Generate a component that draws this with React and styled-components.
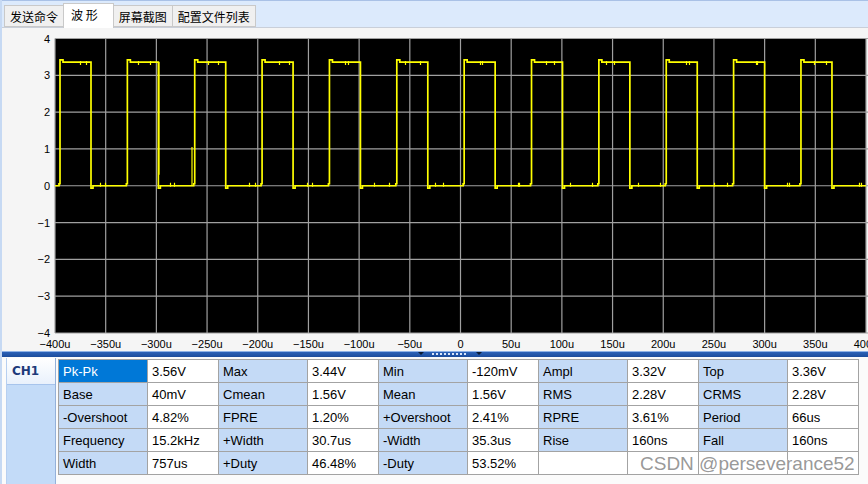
import React from 'react'
import styled, { createGlobalStyle } from 'styled-components'

const GlobalStyle = createGlobalStyle`
  html, body { margin: 0; padding: 0; background: #f5f5f5; }
  body { font-family: "Liberation Sans", Arial, sans-serif; }
`

const tabs = ['发送命令', '波 形', '屏幕截图', '配置文件列表']

const rows = [
  [['Pk-Pk', '3.56V'], ['Max', '3.44V'], ['Min', '-120mV'], ['Ampl', '3.32V'], ['Top', '3.36V']],
  [['Base', '40mV'], ['Cmean', '1.56V'], ['Mean', '1.56V'], ['RMS', '2.28V'], ['CRMS', '2.28V']],
  [['-Overshoot', '4.82%'], ['FPRE', '1.20%'], ['+Overshoot', '2.41%'], ['RPRE', '3.61%'], ['Period', '66us']],
  [['Frequency', '15.2kHz'], ['+Width', '30.7us'], ['-Width', '35.3us'], ['Rise', '160ns'], ['Fall', '160ns']],
  [['Width', '757us'], ['+Duty', '46.48%'], ['-Duty', '53.52%'], [null, null], [null, null]],
]

// plot geometry (svg coords, svg starts at page x=2, y=28)
const PX0 = 53
const PX1 = 864
const PY0 = 10.5
const PY1 = 305
const XSTEP = (PX1 - PX0) / 16
const YSTEP = (PY1 - PY0) / 8
const vy = v => PY0 + (4 - v) * YSTEP

const xLabels = Array.from({ length: 17 }, (_, i) => {
  const t = -400 + i * 50
  return t === 0 ? '0' : `${t < 0 ? '\u2212' : ''}${Math.abs(t)}u`
})
const yLabels = [4, 3, 2, 1, 0, -1, -2, -3, -4]

function buildWave() {
  const low = vy(0)
  const high = vy(3.36)
  const spike = vy(3.42)
  let d = `M ${PX0} ${low}`
  for (let i = 0; i < 13; i++) {
    const r = 58 + i * 67.36
    const f = r + 31
    d += ` L ${r - 1} ${low} L ${r - 1} ${low - 2} L ${r} ${low - 2} L ${r} ${spike} L ${r + 3} ${spike} L ${r + 3} ${high}`
    d += ` L ${f} ${high} L ${f} ${low + 2.5} L ${f + 2} ${low + 2.5} L ${f + 2} ${low}`
  }
  d += ` L ${PX1} ${low}`
  return d
}

function buildNoise() {
  let s = 11
  const rnd = () => {
    s = (s * 9301 + 49297) % 233280
    return s / 233280
  }
  const low = vy(0)
  const high = vy(3.36)
  let d = ''
  for (let i = 0; i < 13; i++) {
    const r = 58 + i * 67.36
    const f = r + 31
    for (let k = 0; k < 2; k++) {
      const x = Math.round(r + 6 + rnd() * 22) + 0.5
      d += ` M ${x} ${high - 1} L ${x} ${high + 3}`
    }
    for (let k = 0; k < 2; k++) {
      const x = Math.round(f + 6 + rnd() * 28) + 0.5
      d += ` M ${x} ${low + 1} L ${x} ${low - 3}`
    }
  }
  d += ` M 190 ${vy(1.05)} L 190 ${low}`
  d += ` M 157 ${vy(3.36)} L 157 ${vy(0.3)}`
  return d
}

const Window = styled.div`
  position: relative;
  width: 866px;
  height: 484px;
  overflow: hidden;
  border-left: 2px solid #c6d9f3;
  background: #f5f5f5;
  display: flex;
  flex-direction: column;
`

const TabBar = styled.div`
  height: 27px;
  flex: none;
  display: flex;
  align-items: flex-end;
  padding-left: 2px;
  background: #dceafc;
  border-top: 1px solid #a9c1e6;
  border-bottom: 1px solid #c9cfd9;
  box-sizing: border-box;
  height: 28px;
`

const Tab = styled.div`
  box-sizing: border-box;
  height: ${p => (p.$active ? '25px' : '22px')};
  margin-bottom: ${p => (p.$active ? '-1px' : '0')};
  padding: ${p => (p.$active ? '0 15px 3px 7px' : '0 5px')};
  display: flex;
  align-items: center;
  background: ${p => (p.$active ? '#ffffff' : '#f0f0f0')};
  border: 1px solid #c9c9c9;
  border-bottom: ${p => (p.$active ? 'none' : '1px solid #c9c9c9')};
  margin-right: -1px;
  font-family: "Noto Sans CJK SC", "Liberation Sans", sans-serif;
  font-size: 12px;
  color: #000;
  white-space: pre;
  position: relative;
  z-index: ${p => (p.$active ? 1 : 0)};
`

const ScopePanel = styled.div`
  height: 323px;
  flex: none;
  background: #f5f5f5;
`

const Splitter = styled.div`
  flex: none;
  height: 5px;
  border-top: 1px solid #8fb2e6;
  background: linear-gradient(#2b62b8, #1c4c9c);
  display: flex;
  align-items: flex-start;
  padding-left: 413px;
`

const BottomPanel = styled.div`
  flex: 1;
  display: flex;
  gap: 2px;
  padding: 1px 0 0 4px;
  background: #fbfbfb;
`

const ChannelColumn = styled.div`
  width: 48px;
  height: 100%;
  background: #c3dbf8;
  border-left: 1px solid #b7cff0;
  border-right: 1px solid #94b1da;
`

const ChannelTab = styled.div`
  height: 26px;
  display: flex;
  align-items: center;
  padding-left: 5px;
  background: linear-gradient(#ffffff, #e9f1fc);
  border-bottom: 1px solid #a7c4ec;
  font-family: Tahoma, "DejaVu Sans", "Liberation Sans", sans-serif;
  font-weight: bold;
  font-size: 12px;
  color: #1d3a7a;
`

const MeasureGrid = styled.div`
  margin-top: 1px;
  align-self: flex-start;
  display: grid;
  grid-template-columns: repeat(5, 88px 70px);
  grid-auto-rows: 22px;
  gap: 1px;
  padding: 1px;
  background: #a3a3a3;
`

const Cell = styled.div`
  display: flex;
  align-items: center;
  padding-left: 4px;
  font-size: 13px;
  white-space: nowrap;
  background: ${p => (p.$kind === 'selected' ? '#0078d7' : p.$kind === 'label' ? '#c4daf6' : '#ffffff')};
  color: ${p => (p.$kind === 'selected' ? '#ffffff' : '#000000')};
`

const Watermark = styled.div`
  position: absolute;
  left: 638px;
  top: 454px;
  font-family: "Liberation Sans", Arial, sans-serif;
  font-size: 19px;
  line-height: 1;
  color: rgba(140, 140, 140, 0.9);
  text-shadow: 0 0 1px #fff, 0 0 1px #fff;
  white-space: nowrap;
  pointer-events: none;
`

function Scope() {
  const wave = buildWave()
  const noise = buildNoise()
  return (
    <svg width="866" height="323" viewBox="0 0 866 323">
      <defs>
        <clipPath id="plot">
          <rect x={PX0} y={PY0} width={PX1 - PX0} height={PY1 - PY0} />
        </clipPath>
      </defs>
      <rect x={PX0} y={PY0} width={PX1 - PX0} height={PY1 - PY0} fill="#000" />
      <g stroke="#a0a0a0" strokeWidth="1.2">
        {Array.from({ length: 17 }, (_, i) => (
          <line key={`v${i}`} x1={PX0 + i * XSTEP} y1={PY0} x2={PX0 + i * XSTEP} y2={PY1} />
        ))}
        {Array.from({ length: 9 }, (_, j) => (
          <line key={`h${j}`} x1={PX0} y1={PY0 + j * YSTEP} x2={PX1 + 2} y2={PY0 + j * YSTEP} />
        ))}
      </g>
      <g clipPath="url(#plot)" fill="none" stroke="#ffff00">
        <path d={wave} strokeWidth="1.7" strokeLinejoin="miter" />
        <path d={noise} strokeWidth="1.2" />
      </g>
      <g fontFamily="Liberation Sans, Arial, sans-serif" fontSize="11" fill="#000">
        {yLabels.map((v, j) => (
          <text key={v} x="48" y={PY0 + j * YSTEP + 4} textAnchor="end">
            {v < 0 ? `\u2212${-v}` : v}
          </text>
        ))}
        {xLabels.map((t, i) => (
          <text key={t} x={PX0 + i * XSTEP} y="320" textAnchor="middle">
            {t}
          </text>
        ))}
      </g>
    </svg>
  )
}

function SplitGrip() {
  return (
    <svg width="70" height="4" viewBox="0 0 70 4">
      <path d="M3 0 L9 0 L6 3 Z" fill="#0a1a33" />
      <path d="M61 0 L67 0 L64 3 Z" fill="#0a1a33" />
      {Array.from({ length: 9 }, (_, i) => (
        <rect key={i} x={17 + i * 4} y="1" width="2" height="2" fill="#dbe7fb" />
      ))}
    </svg>
  )
}

export default function App() {
  return (
    <>
      <GlobalStyle />
      <Window>
        <TabBar>
          {tabs.map((t, i) => (
            <Tab key={t} $active={i === 1}>
              {t}
            </Tab>
          ))}
        </TabBar>
        <ScopePanel>
          <Scope />
        </ScopePanel>
        <Splitter>
          <SplitGrip />
        </Splitter>
        <BottomPanel>
          <ChannelColumn>
            <ChannelTab>CH1</ChannelTab>
          </ChannelColumn>
          <MeasureGrid>
            {rows.map((row, r) =>
              row.map(([label, value], c) => (
                <React.Fragment key={`${r}-${c}`}>
                  <Cell $kind={r === 0 && c === 0 ? 'selected' : label ? 'label' : 'empty'}>{label}</Cell>
                  <Cell $kind="value">{value}</Cell>
                </React.Fragment>
              ))
            )}
          </MeasureGrid>
        </BottomPanel>
        <Watermark>CSDN @perseverance52</Watermark>
      </Window>
    </>
  )
}
